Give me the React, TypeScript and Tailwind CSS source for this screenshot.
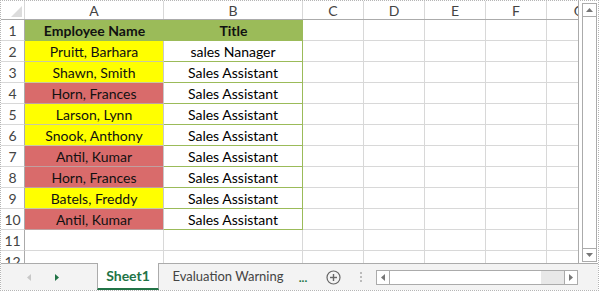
import React from "react";

const rows: { name: string; title: string; color: "y" | "r" }[] = [
  { name: "Pruitt, Barhara", title: "sales Nanager", color: "y" },
  { name: "Shawn, Smith", title: "Sales Assistant", color: "y" },
  { name: "Horn, Frances", title: "Sales Assistant", color: "r" },
  { name: "Larson, Lynn", title: "Sales Assistant", color: "y" },
  { name: "Snook, Anthony", title: "Sales Assistant", color: "y" },
  { name: "Antil, Kumar", title: "Sales Assistant", color: "r" },
  { name: "Horn, Frances", title: "Sales Assistant", color: "r" },
  { name: "Batels, Freddy", title: "Sales Assistant", color: "y" },
  { name: "Antil, Kumar", title: "Sales Assistant", color: "r" },
];

const font = { fontFamily: 'Lato, "Open Sans", "Liberation Sans", sans-serif' };

function RowHead({ n, h = "h-[21px]" }: { n: number; h?: string }) {
  return (
    <div className={`w-[24px] ${h} shrink-0 flex items-center justify-center text-[14px] text-[#444] border-r border-[#ababab] border-b border-b-[#d8d8d8]`}>
      {n}
    </div>
  );
}

function EmptyCells() {
  return (
    <>
      <div className="w-[61px] shrink-0 border-r border-b border-[#d8d8d8]" />
      <div className="w-[61px] shrink-0 border-r border-b border-[#d8d8d8]" />
      <div className="w-[61px] shrink-0 border-r border-b border-[#d8d8d8]" />
      <div className="w-[61px] shrink-0 border-r border-b border-[#d8d8d8]" />
      <div className="w-[31px] shrink-0 border-b border-[#d8d8d8]" />
    </>
  );
}

export default function App() {
  return (
    <div className="w-[599px] h-[291px] bg-white overflow-hidden" style={font}>
      <div className="w-[599px] h-[291px] border border-dotted border-[#b5b5b5] flex flex-col">
        <div className="flex h-[262px] shrink-0">
          <div className="w-[578px] overflow-hidden flex flex-col border-r border-[#ababab]">
            {/* column header */}
            <div className="flex h-[19px] shrink-0 border-b border-[#ababab] text-[14px] text-[#444]">
              <div className="w-[24px] shrink-0 relative border-r border-[#d8d8d8]">
                <svg className="absolute right-[2px] bottom-[2px]" width="11" height="11" viewBox="0 0 11 11">
                  <polygon points="11,0 11,11 0,11" fill="#dcdcdc" />
                </svg>
              </div>
              <div className="w-[139px] shrink-0 flex items-center justify-center border-r border-[#d8d8d8]">A</div>
              <div className="w-[139px] shrink-0 flex items-center justify-center border-r border-[#d8d8d8]">B</div>
              <div className="w-[61px] shrink-0 flex items-center justify-center border-r border-[#d8d8d8]">C</div>
              <div className="w-[61px] shrink-0 flex items-center justify-center border-r border-[#d8d8d8]">D</div>
              <div className="w-[61px] shrink-0 flex items-center justify-center border-r border-[#d8d8d8]">E</div>
              <div className="w-[61px] shrink-0 flex items-center justify-center border-r border-[#d8d8d8]">F</div>
              <div className="w-[31px] shrink-0 flex items-center justify-end overflow-hidden">
                <span className="translate-x-[6px]">G</span>
              </div>
            </div>
            {/* row 1 */}
            <div className="flex h-[21px] shrink-0">
              <RowHead n={1} />
              <div className="w-[278px] shrink-0 flex bg-[#9bbb59] border-b border-[#9bbb59] font-bold text-[14px] text-[#111]">
                <div className="w-[139px] flex items-center justify-center">Employee Name</div>
                <div className="w-[139px] flex items-center justify-center">Title</div>
              </div>
              <EmptyCells />
            </div>
            {rows.map((r, i) => (
              <div key={i} className="flex h-[21px] shrink-0">
                <RowHead n={i + 2} />
                <div
                  className={`w-[139px] shrink-0 flex items-center justify-center text-[14px] text-[#111] border-r border-[#c8c8c8] border-b ${
                    r.color === "y" ? "bg-[#ffff00] border-b-[#c9c9a0]" : "bg-[#d96b6b] border-b-[#c0a0a0]"
                  } ${i === rows.length - 1 ? "border-b-[#9bbb59]" : ""}`}
                >
                  {r.name}
                </div>
                <div className="w-[139px] shrink-0 flex items-center justify-center text-[14px] text-black border-r border-b border-[#9bbb59]">
                  {r.title}
                </div>
                <EmptyCells />
              </div>
            ))}
            <div className="flex h-[21px] shrink-0">
              <RowHead n={11} />
              <div className="w-[139px] shrink-0 border-r border-b border-[#d8d8d8]" />
              <div className="w-[139px] shrink-0 border-r border-b border-[#d8d8d8]" />
              <EmptyCells />
            </div>
            <div className="flex h-[21px] shrink-0">
              <RowHead n={12} />
              <div className="w-[139px] shrink-0 border-r border-b border-[#d8d8d8]" />
              <div className="w-[139px] shrink-0 border-r border-b border-[#d8d8d8]" />
              <EmptyCells />
            </div>
          </div>
          {/* vertical scrollbar */}
          <div className="flex-1 flex flex-col items-center pt-[2px] pb-[1px] pl-[2px]">
            <div className="w-[15px] flex-1 border border-[#ababab] flex flex-col bg-white">
              <div className="h-[13px] border-b border-[#ababab] flex items-center justify-center">
                <svg width="7" height="4" viewBox="0 0 7 4"><polygon points="0,4 7,4 3.5,0" fill="#777" /></svg>
              </div>
              <div className="flex-1" />
              <div className="h-[13px] border-t border-[#ababab] flex items-center justify-center">
                <svg width="7" height="4" viewBox="0 0 7 4"><polygon points="0,0 7,0 3.5,4" fill="#777" /></svg>
              </div>
            </div>
          </div>
        </div>
        {/* tab bar */}
        <div className="flex-1 flex items-stretch border-t border-[#ababab] bg-[#f3f3f3] text-[14px]">
          <div className="w-[96px] shrink-0 flex items-center">
            <svg className="ml-[26px]" width="4" height="7" viewBox="0 0 4 7"><polygon points="4,0 4,7 0,3.5" fill="#c8c8c8" /></svg>
            <svg className="ml-[24px]" width="4" height="7" viewBox="0 0 4 7"><polygon points="0,0 0,7 4,3.5" fill="#217346" /></svg>
          </div>
          <div className="w-[62px] shrink-0 -mt-px bg-white border-x border-[#ababab] border-b-[2px] border-b-[#217346] flex items-center justify-center font-bold text-[#217346]">
            Sheet1
          </div>
          <div className="w-[138px] shrink-0 flex items-center justify-center text-[13px] text-[#444]">Evaluation Warning</div>
          <div className="w-[12px] shrink-0 flex items-center justify-center text-[#217346] font-bold text-[12px] pt-[2px]">...</div>
          <div className="w-[48px] shrink-0 flex items-center justify-center">
            <svg width="15" height="15" viewBox="0 0 15 15">
              <circle cx="7.5" cy="7.5" r="6.5" fill="none" stroke="#666" strokeWidth="1.2" />
              <line x1="7.5" y1="4" x2="7.5" y2="11" stroke="#666" strokeWidth="1.4" />
              <line x1="4" y1="7.5" x2="11" y2="7.5" stroke="#666" strokeWidth="1.4" />
            </svg>
          </div>
          <div className="w-[8px] shrink-0 flex flex-col items-center justify-center gap-[2px]">
            <div className="w-[2px] h-[2px] bg-[#bbb]" />
            <div className="w-[2px] h-[2px] bg-[#bbb]" />
            <div className="w-[2px] h-[2px] bg-[#bbb]" />
          </div>
          <div className="w-[11px] shrink-0" />
          <div className="w-[202px] shrink-0 flex items-center">
            <div className="w-[202px] h-[15px] border border-[#ababab] bg-white flex">
              <div className="w-[13px] border-r border-[#ababab] flex items-center justify-center">
                <svg width="4" height="7" viewBox="0 0 4 7"><polygon points="4,0 4,7 0,3.5" fill="#777" /></svg>
              </div>
              <div className="flex-1" />
              <div className="w-[23px] bg-[#e8e8e8]" />
              <div className="w-[13px] border-l border-[#ababab] flex items-center justify-center">
                <svg width="4" height="7" viewBox="0 0 4 7"><polygon points="0,0 0,7 4,3.5" fill="#777" /></svg>
              </div>
            </div>
          </div>
        </div>
      </div>
    </div>
  );
}
